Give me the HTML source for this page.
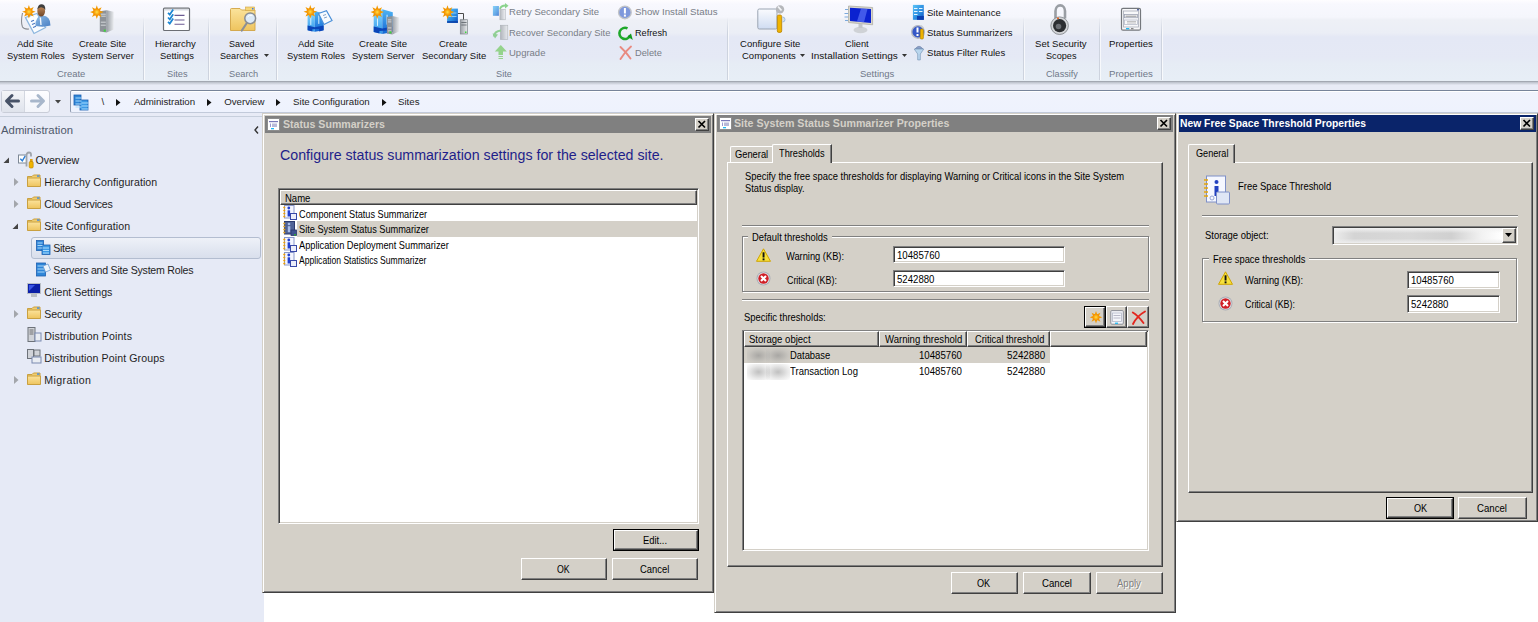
<!DOCTYPE html>
<html><head><meta charset="utf-8">
<style>
*{margin:0;padding:0;box-sizing:border-box}
html,body{width:1538px;height:622px;overflow:hidden;background:#fff;font-family:"Liberation Sans",sans-serif;position:relative}
.t{position:absolute;white-space:nowrap}
.r{position:absolute}
svg.r{overflow:visible}
</style></head><body>
<div class="r" style="left:0px;top:0px;width:1538px;height:82px;background:linear-gradient(#fefdff 0px,#f8f8fe 4px,#f5f6fc 17px,#eef0f6 20px,#ebeef6 33px,#e4e8f5 37px,#e5e9f5 58px,#e6ecf5 63px,#e7eef6 80px)"></div>
<div class="r" style="left:0px;top:81px;width:1538px;height:1px;background:#a3a8b2"></div>
<div class="r" style="left:0px;top:82px;width:1538px;height:3px;background:linear-gradient(#b9bec8,#e6e9f4)"></div>
<div class="r" style="left:143px;top:17px;width:1px;height:63px;background:linear-gradient(rgba(205,211,222,0),#cdd3de 25%,#cdd3de)"></div>
<div class="r" style="left:144px;top:17px;width:1px;height:63px;background:linear-gradient(rgba(255,255,255,0),rgba(255,255,255,.7) 25%,rgba(255,255,255,.7))"></div>
<div class="r" style="left:208px;top:17px;width:1px;height:63px;background:linear-gradient(rgba(205,211,222,0),#cdd3de 25%,#cdd3de)"></div>
<div class="r" style="left:209px;top:17px;width:1px;height:63px;background:linear-gradient(rgba(255,255,255,0),rgba(255,255,255,.7) 25%,rgba(255,255,255,.7))"></div>
<div class="r" style="left:276px;top:17px;width:1px;height:63px;background:linear-gradient(rgba(205,211,222,0),#cdd3de 25%,#cdd3de)"></div>
<div class="r" style="left:277px;top:17px;width:1px;height:63px;background:linear-gradient(rgba(255,255,255,0),rgba(255,255,255,.7) 25%,rgba(255,255,255,.7))"></div>
<div class="r" style="left:727px;top:17px;width:1px;height:63px;background:linear-gradient(rgba(205,211,222,0),#cdd3de 25%,#cdd3de)"></div>
<div class="r" style="left:728px;top:17px;width:1px;height:63px;background:linear-gradient(rgba(255,255,255,0),rgba(255,255,255,.7) 25%,rgba(255,255,255,.7))"></div>
<div class="r" style="left:1023px;top:17px;width:1px;height:63px;background:linear-gradient(rgba(205,211,222,0),#cdd3de 25%,#cdd3de)"></div>
<div class="r" style="left:1024px;top:17px;width:1px;height:63px;background:linear-gradient(rgba(255,255,255,0),rgba(255,255,255,.7) 25%,rgba(255,255,255,.7))"></div>
<div class="r" style="left:1099px;top:17px;width:1px;height:63px;background:linear-gradient(rgba(205,211,222,0),#cdd3de 25%,#cdd3de)"></div>
<div class="r" style="left:1100px;top:17px;width:1px;height:63px;background:linear-gradient(rgba(255,255,255,0),rgba(255,255,255,.7) 25%,rgba(255,255,255,.7))"></div>
<div class="r" style="left:1161px;top:17px;width:1px;height:63px;background:linear-gradient(rgba(205,211,222,0),#cdd3de 25%,#cdd3de)"></div>
<div class="r" style="left:1162px;top:17px;width:1px;height:63px;background:linear-gradient(rgba(255,255,255,0),rgba(255,255,255,.7) 25%,rgba(255,255,255,.7))"></div>
<div class="t" style="left:17.1px;top:38.92px;font-size:9.9px;line-height:9.9px;color:#111;transform:scaleX(0.9646);transform-origin:0 0;">Add Site</div>
<div class="t" style="left:6.8px;top:50.92px;font-size:9.9px;line-height:9.9px;color:#111;transform:scaleX(0.9465);transform-origin:0 0;">System Roles</div>
<div class="t" style="left:78.5px;top:38.92px;font-size:9.9px;line-height:9.9px;color:#111;transform:scaleX(0.9571);transform-origin:0 0;">Create Site</div>
<div class="t" style="left:71.7px;top:50.92px;font-size:9.9px;line-height:9.9px;color:#111;transform:scaleX(0.9551);transform-origin:0 0;">System Server</div>
<div class="t" style="left:155.3px;top:38.92px;font-size:9.9px;line-height:9.9px;color:#111;transform:scaleX(0.9678);transform-origin:0 0;">Hierarchy</div>
<div class="t" style="left:159.7px;top:50.92px;font-size:9.9px;line-height:9.9px;color:#111;transform:scaleX(0.9505);transform-origin:0 0;">Settings</div>
<div class="t" style="left:229.1px;top:38.92px;font-size:9.9px;line-height:9.9px;color:#111;transform:scaleX(0.9119);transform-origin:0 0;">Saved</div>
<div class="t" style="left:220.4px;top:50.92px;font-size:9.9px;line-height:9.9px;color:#111;transform:scaleX(0.9181);transform-origin:0 0;">Searches</div>
<div class="t" style="left:297.8px;top:38.92px;font-size:9.9px;line-height:9.9px;color:#111;transform:scaleX(0.9592);transform-origin:0 0;">Add Site</div>
<div class="t" style="left:287.3px;top:50.92px;font-size:9.9px;line-height:9.9px;color:#111;transform:scaleX(0.9514);transform-origin:0 0;">System Roles</div>
<div class="t" style="left:358.8px;top:38.92px;font-size:9.9px;line-height:9.9px;color:#111;transform:scaleX(0.9732);transform-origin:0 0;">Create Site</div>
<div class="t" style="left:352.3px;top:50.92px;font-size:9.9px;line-height:9.9px;color:#111;transform:scaleX(0.9658);transform-origin:0 0;">System Server</div>
<div class="t" style="left:439.0px;top:38.92px;font-size:9.9px;line-height:9.9px;color:#111;transform:scaleX(0.9557);transform-origin:0 0;">Create</div>
<div class="t" style="left:422.0px;top:50.92px;font-size:9.9px;line-height:9.9px;color:#111;transform:scaleX(0.9577);transform-origin:0 0;">Secondary Site</div>
<div class="t" style="left:740.3px;top:38.92px;font-size:9.9px;line-height:9.9px;color:#111;transform:scaleX(0.9643);transform-origin:0 0;">Configure Site</div>
<div class="t" style="left:741.5px;top:50.92px;font-size:9.9px;line-height:9.9px;color:#111;transform:scaleX(0.9620);transform-origin:0 0;">Components</div>
<div class="t" style="left:845.0px;top:38.92px;font-size:9.9px;line-height:9.9px;color:#111;transform:scaleX(0.9363);transform-origin:0 0;">Client</div>
<div class="t" style="left:811.2px;top:50.92px;font-size:9.9px;line-height:9.9px;color:#111;transform:scaleX(1.0134);transform-origin:0 0;">Installation Settings</div>
<div class="t" style="left:1034.7px;top:38.92px;font-size:9.9px;line-height:9.9px;color:#111;transform:scaleX(0.9686);transform-origin:0 0;">Set Security</div>
<div class="t" style="left:1046.0px;top:50.92px;font-size:9.9px;line-height:9.9px;color:#111;transform:scaleX(0.9267);transform-origin:0 0;">Scopes</div>
<div class="t" style="left:1108.9px;top:38.92px;font-size:9.9px;line-height:9.9px;color:#111;transform:scaleX(0.9729);transform-origin:0 0;">Properties</div>
<svg class="r" style="left:263.5px;top:54px" width="5" height="3"><path d="M0 0H5L2.5 3Z" fill="#333"/></svg>
<svg class="r" style="left:799.5px;top:54px" width="5" height="3"><path d="M0 0H5L2.5 3Z" fill="#333"/></svg>
<svg class="r" style="left:902px;top:54px" width="5" height="3"><path d="M0 0H5L2.5 3Z" fill="#333"/></svg>
<div class="t" style="left:509.3px;top:7.22px;font-size:9.9px;line-height:9.9px;color:#787d86;transform:scaleX(0.9653);transform-origin:0 0;">Retry Secondary Site</div>
<div class="t" style="left:509.3px;top:27.82px;font-size:9.9px;line-height:9.9px;color:#787d86;transform:scaleX(0.9526);transform-origin:0 0;">Recover Secondary Site</div>
<div class="t" style="left:509.3px;top:48.12px;font-size:9.9px;line-height:9.9px;color:#787d86;transform:scaleX(0.9611);transform-origin:0 0;">Upgrade</div>
<div class="t" style="left:635.0px;top:7.22px;font-size:9.9px;line-height:9.9px;color:#787d86;transform:scaleX(0.9834);transform-origin:0 0;">Show Install Status</div>
<div class="t" style="left:635.0px;top:27.82px;font-size:9.9px;line-height:9.9px;color:#111;transform:scaleX(0.9289);transform-origin:0 0;">Refresh</div>
<div class="t" style="left:635.0px;top:48.12px;font-size:9.9px;line-height:9.9px;color:#787d86;transform:scaleX(0.9400);transform-origin:0 0;">Delete</div>
<div class="t" style="left:927.3px;top:7.52px;font-size:9.9px;line-height:9.9px;color:#111;transform:scaleX(0.9660);transform-origin:0 0;">Site Maintenance</div>
<div class="t" style="left:927.3px;top:27.82px;font-size:9.9px;line-height:9.9px;color:#111;transform:scaleX(0.9627);transform-origin:0 0;">Status Summarizers</div>
<div class="t" style="left:927.3px;top:48.12px;font-size:9.9px;line-height:9.9px;color:#111;transform:scaleX(0.9693);transform-origin:0 0;">Status Filter Rules</div>
<div class="t" style="left:57.0px;top:69.22px;font-size:9.9px;line-height:9.9px;color:#6f7888;transform:scaleX(0.9557);transform-origin:0 0;">Create</div>
<div class="t" style="left:167.3px;top:69.22px;font-size:9.9px;line-height:9.9px;color:#6f7888;transform:scaleX(0.9360);transform-origin:0 0;">Sites</div>
<div class="t" style="left:228.8px;top:69.22px;font-size:9.9px;line-height:9.9px;color:#6f7888;transform:scaleX(0.9340);transform-origin:0 0;">Search</div>
<div class="t" style="left:495.8px;top:69.22px;font-size:9.9px;line-height:9.9px;color:#6f7888;transform:scaleX(0.9320);transform-origin:0 0;">Site</div>
<div class="t" style="left:860.0px;top:69.22px;font-size:9.9px;line-height:9.9px;color:#6f7888;transform:scaleX(0.9616);transform-origin:0 0;">Settings</div>
<div class="t" style="left:1046.0px;top:69.22px;font-size:9.9px;line-height:9.9px;color:#6f7888;transform:scaleX(0.9234);transform-origin:0 0;">Classify</div>
<div class="t" style="left:1108.9px;top:69.22px;font-size:9.9px;line-height:9.9px;color:#6f7888;transform:scaleX(0.9729);transform-origin:0 0;">Properties</div>
<svg width="0" height="0" style="position:absolute"><defs><radialGradient id="gStar"><stop offset="0" stop-color="#ffe04a"/><stop offset=".5" stop-color="#fbb21a"/><stop offset="1" stop-color="#f28a00"/></radialGradient><linearGradient id="gBody" x1="0" y1="0" x2="1" y2="1"><stop offset="0" stop-color="#8ebbe6"/><stop offset="1" stop-color="#4a80c4"/></linearGradient><linearGradient id="gFace" x1="0" y1="0" x2="0" y2="1"><stop offset="0" stop-color="#c88f5e"/><stop offset="1" stop-color="#6e4426"/></linearGradient><linearGradient id="gSrv" x1="0" y1="0" x2="1" y2="0"><stop offset="0" stop-color="#9a9fa5"/><stop offset="1" stop-color="#e9ebee"/></linearGradient><linearGradient id="gBld" x1="0" y1="0" x2="1" y2="1"><stop offset="0" stop-color="#5cc4f7"/><stop offset=".6" stop-color="#2a8ae0"/><stop offset="1" stop-color="#0c4fc0"/></linearGradient><linearGradient id="gFold" x1="0" y1="0" x2="0" y2="1"><stop offset="0" stop-color="#fbe39c"/><stop offset="1" stop-color="#eec45e"/></linearGradient><linearGradient id="gWin" x1="0" y1="0" x2="0" y2="1"><stop offset="0" stop-color="#fafbfe"/><stop offset="1" stop-color="#cfdcf2"/></linearGradient><linearGradient id="gBldL" x1="0" y1="0" x2="0" y2="1"><stop offset="0" stop-color="#8fdcff"/><stop offset="1" stop-color="#2f95ea"/></linearGradient><linearGradient id="gBldR" x1="0" y1="0" x2="0" y2="1"><stop offset="0" stop-color="#4fb4f4"/><stop offset="1" stop-color="#1468d4"/></linearGradient></defs></svg>
<svg class="r" style="left:18px;top:2px" width="36" height="34" viewBox="18 2 36 34"><path d="M22.5 13 Q20.5 22 22.5 27 Q24 29.5 29 29" fill="none" stroke="#8a8d92" stroke-width="1.1"/><path d="M25.5 17.5 L37 13.5 L45.5 27.5 L34 33.5 Z" fill="#fbfdff" stroke="#8cb6de" stroke-width="1.3"/><path d="M31 21.5 l3-1.2 M32 24.5 l3-1.2 M33 27.5 l3-1.2" stroke="#4c78c0" stroke-width="1.1"/><path d="M35.5 26 Q35 16 42.5 15.5 Q50.5 16 50.5 25.5 Q45 27 40 26.5 Z" fill="url(#gBody)"/><path d="M40.3 17.5 L41 25" stroke="#f4f7fb" stroke-width="1.4"/><ellipse cx="41.2" cy="11" rx="3.9" ry="5.6" fill="url(#gFace)"/><path d="M37.3 9.5 Q38 4 42 4.3 Q45.5 4.6 45.3 10 Q44 7.5 41 7.3 Q38.5 7.5 37.3 9.5Z" fill="#3e3e3e"/><polygon points="28.90,5.00 30.20,8.66 33.71,6.99 32.04,10.50 35.70,11.80 32.04,13.10 33.71,16.61 30.20,14.94 28.90,18.60 27.60,14.94 24.09,16.61 25.76,13.10 22.10,11.80 25.76,10.50 24.09,6.99 27.60,8.66" fill="#f39a00"/><circle cx="28.9" cy="11.8" r="3.54" fill="url(#gStar)"/></svg>
<svg class="r" style="left:87px;top:2px" width="30" height="34" viewBox="87 2 30 34"><path d="M99.8 11.2 L106.75 10.2 L106.75 32.6 L99.8 31.6 Z" fill="#8d9298"/><path d="M106.75 10.2 L113.7 11.7 L113.7 29.6 L106.75 32.6 Z" fill="url(#gSrv)"/><path d="M100.8 14.2 h4.950000000000003 M100.8 16.2 h4.950000000000003 M100.8 22.2 h4.950000000000003 M100.8 25.2 h4.950000000000003" stroke="#e6e8eb" stroke-width=".8"/><rect x="103.75" y="29.6" width="2" height="2" fill="#38d838"/><polygon points="96.80,5.30 98.10,8.96 101.61,7.29 99.94,10.80 103.60,12.10 99.94,13.40 101.61,16.91 98.10,15.24 96.80,18.90 95.50,15.24 91.99,16.91 93.66,13.40 90.00,12.10 93.66,10.80 91.99,7.29 95.50,8.96" fill="#f39a00"/><circle cx="96.8" cy="12.1" r="3.54" fill="url(#gStar)"/></svg>
<svg class="r" style="left:161px;top:6px" width="31" height="27" viewBox="161 6 31 27"><rect x="163.5" y="8.2" width="26" height="22.3" rx="1" fill="#fff" stroke="#6b6e74" stroke-width="1.2"/><rect x="164.2" y="8.9" width="24.6" height="1.6" fill="#d9dce3"/><path d="M168 12.8 l1.8 1.8 l3.4-5 M168 17.5 l1.8 1.8 l3.4-5 M168 21.8 l1.8 1.8 l3.4-5" fill="none" stroke="#1d86d2" stroke-width="1.7"/><path d="M174.5 15.4 h10 M174.5 20 h10 M174.5 24.3 h10" stroke="#6b5a92" stroke-width="1.1"/></svg>
<svg class="r" style="left:228px;top:5px" width="31" height="28" viewBox="228 5 31 28"><path d="M230.5 9.5 Q230.5 8.5 231.5 8.5 H240 L241.5 10 H255 V30.5 H230.5Z" fill="url(#gFold)" stroke="#d1a444" stroke-width=".9"/><rect x="245.5" y="7" width="9" height="3.5" fill="#f6d678" stroke="#d1a444" stroke-width=".6"/><rect x="252" y="8" width="1.5" height="1.5" fill="#3a7cf0"/><path d="M246.5 23.5 L241.8 30.5" stroke="#8b8f95" stroke-width="2.2" stroke-linecap="round"/><circle cx="250.2" cy="18.3" r="5.4" fill="#dceaf7" stroke="#8a8e94" stroke-width="1.5"/><path d="M247.5 17 Q249 14.8 252.5 15.2" fill="none" stroke="#fff" stroke-width="1"/></svg>
<svg class="r" style="left:298px;top:2px" width="36" height="34" viewBox="298 2 36 34"><path d="M307.6 13.496 L314.8 11 L314.8 31.8 L307.6 30.136Z" fill="url(#gBldL)"/><path d="M314.8 11 L323.6 13.496 L323.6 30.136 L314.8 31.8Z" fill="url(#gBldR)"/><path d="M310.8 16.616 L310.8 24.936 M318.8 15.576 L318.8 23.896" stroke="#e8f8ff" stroke-width="1" opacity=".9"/><path d="M307.6 25.560000000000002 L314.8 27.224 L323.6 25.560000000000002 L323.6 30.136 L319.12 31.384 L319.12 28.888 L312.40000000000003 29.304000000000002 L312.40000000000003 31.384 L307.6 30.136Z" fill="#0b45b8"/><path d="M318.5 13.5 L326.5 10.8 L332 20.5 L324 24.5 Z" fill="#f7fbff" stroke="#4a8fd8" stroke-width="1.2"/><path d="M323 15.5 l3-1 M324 18 l3-1" stroke="#6a8ab8" stroke-width=".8"/><polygon points="310.30,5.00 311.60,8.66 315.11,6.99 313.44,10.50 317.10,11.80 313.44,13.10 315.11,16.61 311.60,14.94 310.30,18.60 309.00,14.94 305.49,16.61 307.16,13.10 303.50,11.80 307.16,10.50 305.49,6.99 309.00,8.66" fill="#f39a00"/><circle cx="310.3" cy="11.8" r="3.54" fill="url(#gStar)"/></svg>
<svg class="r" style="left:365px;top:2px" width="37" height="34" viewBox="365 2 37 34"><path d="M373.7 12.264000000000001 L382.295 9.3 L382.295 34.0 L373.7 32.024Z" fill="url(#gBldL)"/><path d="M382.295 9.3 L392.8 12.264000000000001 L392.8 32.024 L382.295 34.0Z" fill="url(#gBldR)"/><path d="M377.52 15.969000000000001 L377.52 25.849000000000004 M387.07 14.734000000000002 L387.07 24.614" stroke="#e8f8ff" stroke-width="1" opacity=".9"/><path d="M373.7 26.59 L382.295 28.566 L392.8 26.59 L392.8 32.024 L387.452 33.506 L387.452 30.542 L379.43 31.036 L379.43 33.506 L373.7 32.024Z" fill="#0b45b8"/><path d="M386.9 16.9 L392.39 15.9 L392.39 34.4 L386.9 33.4 Z" fill="#8d9298"/><path d="M392.39 15.9 L399.1 17.4 L399.1 31.4 L392.39 34.4 Z" fill="url(#gSrv)"/><path d="M387.9 19.9 h3.490000000000009 M387.9 21.9 h3.490000000000009 M387.9 27.9 h3.490000000000009 M387.9 30.9 h3.490000000000009" stroke="#e6e8eb" stroke-width=".8"/><rect x="389.39" y="31.4" width="2" height="2" fill="#38d838"/><polygon points="377.20,5.30 378.50,8.96 382.01,7.29 380.34,10.80 384.00,12.10 380.34,13.40 382.01,16.91 378.50,15.24 377.20,18.90 375.90,15.24 372.39,16.91 374.06,13.40 370.40,12.10 374.06,10.80 372.39,7.29 375.90,8.96" fill="#f39a00"/><circle cx="377.2" cy="12.1" r="3.54" fill="url(#gStar)"/></svg>
<svg class="r" style="left:438px;top:2px" width="32" height="34" viewBox="438 2 32 34"><rect x="447.1" y="8.6" width="10.8" height="14.3" fill="url(#gBld)"/><path d="M447.1 22 h10.8" stroke="#0a3fa8" stroke-width="1.6"/><path d="M448.5 13 h8 M448.5 16.5 h8" stroke="#c9f0ff" stroke-width=".8" opacity=".8"/><path d="M457.9 13.5 H463.5 V20" fill="none" stroke="#4a4a4a" stroke-width="1"/><rect x="460.3" y="19.7" width="7.3" height="14.3" fill="url(#gSrv)" stroke="#7f858b" stroke-width=".7"/><path d="M461.3 22.5 h5.3 M461.3 25 h5.3" stroke="#5b6167" stroke-width=".8"/><rect x="465" y="31.5" width="1.5" height="1.5" fill="#38d838"/><polygon points="447.50,5.30 448.80,8.96 452.31,7.29 450.64,10.80 454.30,12.10 450.64,13.40 452.31,16.91 448.80,15.24 447.50,18.90 446.20,15.24 442.69,16.91 444.36,13.40 440.70,12.10 444.36,10.80 442.69,7.29 446.20,8.96" fill="#f39a00"/><circle cx="447.5" cy="12.1" r="3.54" fill="url(#gStar)"/></svg>
<svg class="r" style="left:490px;top:3px" width="20" height="18" viewBox="490 3 20 18"><g opacity=".7"><rect x="492.9" y="6" width="6" height="9.8" fill="url(#gBld)"/><rect x="499.9" y="9.4" width="5.4" height="10.4" fill="url(#gSrv)" stroke="#8a9096" stroke-width=".5"/><path d="M500 9 Q501 5.5 505.5 5.5" fill="none" stroke="#5cc45c" stroke-width="1.8"/><path d="M505 3 L508.5 5.7 L505 8.5Z" fill="#5cc45c"/></g></svg>
<svg class="r" style="left:490px;top:23px" width="20" height="18" viewBox="490 23 20 18"><g opacity=".7"><rect x="500.4" y="25.2" width="7.4" height="14.3" fill="url(#gSrv)" stroke="#8a9096" stroke-width=".5"/><path d="M494 36.5 Q494.5 31 501 30.5" fill="none" stroke="#6cc46c" stroke-width="2.2"/><path d="M492.5 33.5 L495 38.5 L498 34.5Z" fill="#6cc46c"/></g></svg>
<svg class="r" style="left:492px;top:43px" width="18" height="18" viewBox="492 43 18 18"><g opacity=".75"><path d="M500.8 45 L506.8 51.5 H503 V55 H498.5 V51.5 H494.8Z" fill="#7acc6a"/><path d="M498.5 56.5 h4.5 M498.5 58.5 h4.5" stroke="#7acc6a" stroke-width="1.2"/></g></svg>
<svg class="r" style="left:616px;top:4px" width="18" height="17" viewBox="616 4 18 17"><circle cx="624.9" cy="12.4" r="6.3" fill="#7e98dc" stroke="#c2c4c8" stroke-width="1.4"/><rect x="623.9" y="8" width="2" height="5.5" fill="#fff"/><rect x="623.9" y="14.6" width="2" height="2" fill="#fff"/></svg>
<svg class="r" style="left:616px;top:25px" width="18" height="17" viewBox="616 25 18 17"><path d="M630.2 35.5 A5.6 5.6 0 1 1 627.5 28.4" fill="none" stroke="#1ea82a" stroke-width="2.6"/><path d="M627.5 36.5 L632.8 40 L631 33.5Z" fill="#129a1e"/></svg>
<svg class="r" style="left:618px;top:44px" width="16" height="17" viewBox="618 44 16 17"><path d="M620.5 47 Q626 52 630.5 58.5 M631 46.5 Q625 51.5 620.5 59" fill="none" stroke="#e88a80" stroke-width="1.9" stroke-linecap="round"/></svg>
<svg class="r" style="left:755px;top:3px" width="33" height="33" viewBox="755 3 33 33"><rect x="757.8" y="9" width="19.2" height="20" rx="1.5" fill="url(#gWin)" stroke="#9aa4b2" stroke-width="1"/><path d="M782.5 17 A2.5 2.5 0 0 1 782.5 22" fill="#cfe0f4" stroke="#8fb0d8" stroke-width=".8"/><rect x="777.3" y="15" width="4.4" height="17.4" rx="1.5" fill="#f0b400" stroke="#b88200" stroke-width=".8"/><circle cx="780" cy="9.4" r="4.2" fill="#b5b7bb"/><path d="M778 6.5 L781.5 10.5" stroke="#f3f4f6" stroke-width="1.8"/></svg>
<svg class="r" style="left:842px;top:3px" width="34" height="32" viewBox="842 3 34 32"><path d="M845 9.5h3 M844.5 13.5h4 M844.5 17h4 M845 20.5h3" stroke="#7aa8dc" stroke-width="1"/><path d="M848.5 6 L872.6 7.5 L872.6 24.8 L848.5 22.5Z" fill="#d8d6cc" stroke="#b0aea4" stroke-width=".8"/><path d="M850 7.8 L871 9 L871 23 L850 21Z" fill="#0b22d0"/><path d="M861 8.5 L867.5 9 L864 22.3 L857 21.6Z" fill="#6f86ff" opacity=".55"/><ellipse cx="860.5" cy="30" rx="7" ry="3.2" fill="#cfd2d6"/><rect x="858.5" y="24" width="4" height="4" fill="#c2c5c9"/></svg>
<svg class="r" style="left:911px;top:3px" width="15" height="18" viewBox="911 3 15 18"><rect x="912.9" y="4.9" width="10.9" height="14.9" fill="url(#gBld)"/><path d="M914 8.5h3.5 M919 8.5h3.5 M914 11.5h3.5 M919 11.5h3.5 M914 14.5h3.5" stroke="#e6f6ff" stroke-width="1.1"/><rect x="917" y="16" width="6.8" height="3.8" fill="#0b3fb0"/></svg>
<svg class="r" style="left:910px;top:24px" width="17" height="17" viewBox="910 24 17 17"><circle cx="918" cy="31.9" r="6.3" fill="#3558c8" stroke="#b8bbc0" stroke-width="1.4"/><rect x="916.5" y="27.5" width="2" height="5" fill="#fff"/><rect x="916.5" y="34" width="2" height="2" fill="#fff"/><rect x="920.2" y="29" width="3.2" height="10" rx="1" fill="#f0b400" stroke="#a87a00" stroke-width=".6"/><path d="M921 25.5 l2.5 2.5" stroke="#c9cbd0" stroke-width="1.4"/></svg>
<svg class="r" style="left:912px;top:44px" width="14" height="17" viewBox="912 44 14 17"><path d="M915 49 Q919 43.5 923 49Z" fill="#8aa0c8" stroke="#6a7fa8" stroke-width=".6"/><path d="M914.2 49 H923.8 L920.3 54 V59.9 H917.7 V54Z" fill="#b9d6ee" stroke="#7a98b8" stroke-width=".7"/></svg>
<svg class="r" style="left:1046px;top:3px" width="29" height="33" viewBox="1046 3 29 33"><path d="M1055.5 18.5 V11 A4.7 5.6 0 0 1 1065 11 V18.5" fill="none" stroke="#9a9ea4" stroke-width="2.6"/><circle cx="1059.6" cy="25.7" r="8.8" fill="#d3d5d8" stroke="#7d8186" stroke-width=".8"/><circle cx="1059.6" cy="25.7" r="6.6" fill="#2c2e31"/><circle cx="1058.5" cy="26.5" r="2.8" fill="#6a6d72"/><rect x="1057" y="17.5" width="2" height="1.5" fill="#e86a2a"/></svg>
<svg class="r" style="left:1119px;top:6px" width="24" height="27" viewBox="1119 6 24 27"><rect x="1121.5" y="8.4" width="19" height="21.8" rx="1.5" fill="#f8f8fa" stroke="#74777c" stroke-width="1.2"/><rect x="1123.5" y="11" width="15" height="16" fill="none" stroke="#a9acb8" stroke-width=".8"/><rect x="1124.5" y="14.5" width="13" height="3.2" fill="none" stroke="#9ea4b4" stroke-width=".8"/><path d="M1125.5 16.2 h11" stroke="#777" stroke-width=".8"/><rect x="1124.5" y="20" width="13" height="4.5" fill="none" stroke="#b0b6c4" stroke-width=".7"/><path d="M1127 21.5 h9 M1127 23 h9" stroke="#aaa" stroke-width=".7"/><rect x="1126" y="28" width="3.3" height="1.3" fill="#20b8f0"/><rect x="1131" y="28" width="2.5" height="1.3" fill="#888"/><rect x="1137" y="9" width="2" height="1.5" fill="#5a6aa0"/></svg>
<div class="r" style="left:0px;top:85px;width:1538px;height:31px;background:#e8ebf6"></div>
<div class="r" style="left:0px;top:116px;width:1538px;height:1px;background:#c7cfdc"></div>
<div class="r" style="left:1px;top:90px;width:49px;height:23px;background:linear-gradient(#fdfdff,#f2f4fa);border:1px solid #c9cdd8;border-radius:3px"></div>
<div class="r" style="left:2px;top:91px;width:22px;height:21px;background:linear-gradient(#f4f5f8,#dfe3ec)"></div>
<div class="r" style="left:24px;top:91px;width:1px;height:21px;background:#d3d7e0"></div>
<svg class="r" style="left:4px;top:93px" width="17" height="17" viewBox="0 0 17 17"><path d="M8 2.5 L2.5 8 L8 13.5 M3 8 H14.5" fill="none" stroke="#485368" stroke-width="3" stroke-linecap="round" stroke-linejoin="round"/></svg>
<svg class="r" style="left:29px;top:93px" width="17" height="17" viewBox="0 0 17 17"><path d="M9 2.5 L14.5 8 L9 13.5 M14 8 H2.5" fill="none" stroke="#a8b7cb" stroke-width="3" stroke-linecap="round" stroke-linejoin="round"/></svg>
<svg class="r" style="left:55px;top:99.5px" width="6" height="4" viewBox="0 0 6 4"><path d="M0 0H6L3 3.5Z" fill="#444"/></svg>
<div class="r" style="left:70px;top:90px;width:1475px;height:23px;background:linear-gradient(#f0f3fd,#eef2fd);border:1px solid;border-color:#77849a #9aa6b8 #c2cada #8f9bb0;border-radius:2px;box-shadow:inset 0 1px 0 #fff"></div>
<svg class="r" style="left:74px;top:94px" width="16" height="16" viewBox="0 0 16 16"><g transform="translate(0,-1)"><rect x="0" y="2" width="7" height="10" fill="#2f86d8"/><rect x="0" y="2" width="7" height="10" fill="none" stroke="#1c5fb0" stroke-width=".8"/><rect x="6" y="7" width="8" height="10" fill="#3d9ae6"/><rect x="6" y="7" width="8" height="10" fill="none" stroke="#1c5fb0" stroke-width=".8"/><path d="M1.5 5h6M1.5 8h6M1.5 11h6M1.5 14h6M7.5 10h7M7.5 13h7M7.5 16h7" stroke="#a8dcff" stroke-width="1"/></g></svg>
<div class="t" style="left:101.4px;top:96.79px;font-size:9.7px;line-height:9.7px;color:#1e1e1e;">\</div>
<svg class="r" style="left:116px;top:98.5px" width="5" height="7" viewBox="0 0 5 7"><path d="M0 0 L4.5 3.5 L0 7Z" fill="#111"/></svg>
<svg class="r" style="left:207px;top:98.5px" width="5" height="7" viewBox="0 0 5 7"><path d="M0 0 L4.5 3.5 L0 7Z" fill="#111"/></svg>
<svg class="r" style="left:276px;top:98.5px" width="5" height="7" viewBox="0 0 5 7"><path d="M0 0 L4.5 3.5 L0 7Z" fill="#111"/></svg>
<svg class="r" style="left:381.8px;top:98.5px" width="5" height="7" viewBox="0 0 5 7"><path d="M0 0 L4.5 3.5 L0 7Z" fill="#111"/></svg>
<div class="t" style="left:133.9px;top:96.79px;font-size:9.7px;line-height:9.7px;color:#1e1e1e;letter-spacing:-0.012px;">Administration</div>
<div class="t" style="left:224.3px;top:96.79px;font-size:9.7px;line-height:9.7px;color:#1e1e1e;letter-spacing:-0.032px;">Overview</div>
<div class="t" style="left:293.1px;top:96.79px;font-size:9.7px;line-height:9.7px;color:#1e1e1e;letter-spacing:-0.024px;">Site Configuration</div>
<div class="t" style="left:398.0px;top:96.79px;font-size:9.7px;line-height:9.7px;color:#1e1e1e;letter-spacing:-0.016px;">Sites</div>
<div class="r" style="left:0px;top:117px;width:264px;height:505px;background:#e6eaf6"></div>
<div class="t" style="left:1.0px;top:125.43px;font-size:11.3px;line-height:11.3px;color:#4f596b;letter-spacing:0.031px;">Administration</div>
<svg class="r" style="left:254px;top:126px" width="5" height="8" viewBox="0 0 5 8"><path d="M4 0.5 L1 4 L4 7.5" fill="none" stroke="#333" stroke-width="1.4"/></svg>
<svg class="r" style="left:3px;top:157px" width="7" height="7" viewBox="0 0 7 7"><path d="M6 0.5 V6 H0.5Z" fill="#444"/></svg>
<svg class="r" style="left:18px;top:151px" width="16" height="18" viewBox="0 0 16 18"><rect x="0.5" y="4" width="8" height="8" fill="#fff" stroke="#7d8896" stroke-width="1"/><path d="M2.3 7.8 l2 2 3-5" fill="none" stroke="#2a7dd6" stroke-width="1.4"/><path d="M8.5 15.5 V5 Q8.5 1.5 11 1.5 Q13 1.5 13 3.5 V5.5" fill="none" stroke="#9ea3aa" stroke-width="1.8"/><rect x="12" y="8" width="2.6" height="3" fill="#e0a010"/><rect x="11.2" y="10.5" width="4" height="6.5" rx="1.2" fill="#f0b400" stroke="#b88200" stroke-width=".6"/></svg>
<div class="t" style="left:35.5px;top:155.03px;font-size:10.6px;line-height:10.6px;color:#1e1e1e;letter-spacing:-0.054px;">Overview</div>
<svg class="r" style="left:14px;top:178px" width="5" height="8" viewBox="0 0 5 8"><path d="M0 0 L4.5 4 L0 8Z" fill="#a3a6ab"/></svg>
<svg class="r" style="left:27px;top:174px" width="14" height="13" viewBox="0 0 14 13"><path d="M0.5 2.5 H5 L6.5 1 H13 V12 H0.5Z" fill="#f0cd70" stroke="#c9a040" stroke-width="1"/><path d="M0.5 4 H13.5 V12.5 H0.5Z" fill="url(#gFold)" stroke="#c9a040" stroke-width="1"/><rect x="10" y="1.3" width="2.5" height="1.5" fill="#4a8fe0"/></svg>
<div class="t" style="left:44.3px;top:177.03px;font-size:10.6px;line-height:10.6px;color:#1e1e1e;letter-spacing:0.075px;">Hierarchy Configuration</div>
<svg class="r" style="left:14px;top:200px" width="5" height="8" viewBox="0 0 5 8"><path d="M0 0 L4.5 4 L0 8Z" fill="#a3a6ab"/></svg>
<svg class="r" style="left:27px;top:196px" width="14" height="13" viewBox="0 0 14 13"><path d="M0.5 2.5 H5 L6.5 1 H13 V12 H0.5Z" fill="#f0cd70" stroke="#c9a040" stroke-width="1"/><path d="M0.5 4 H13.5 V12.5 H0.5Z" fill="url(#gFold)" stroke="#c9a040" stroke-width="1"/><rect x="10" y="1.3" width="2.5" height="1.5" fill="#4a8fe0"/></svg>
<div class="t" style="left:44.3px;top:199.03px;font-size:10.6px;line-height:10.6px;color:#1e1e1e;letter-spacing:-0.207px;">Cloud Services</div>
<svg class="r" style="left:12px;top:223px" width="7" height="7" viewBox="0 0 7 7"><path d="M6 0.5 V6 H0.5Z" fill="#444"/></svg>
<svg class="r" style="left:27px;top:218px" width="14" height="13" viewBox="0 0 14 13"><path d="M0.5 2.5 H5 L6.5 1 H13 V12 H0.5Z" fill="#f0cd70" stroke="#c9a040" stroke-width="1"/><path d="M0.5 4 H13.5 V12.5 H0.5Z" fill="url(#gFold)" stroke="#c9a040" stroke-width="1"/><rect x="10" y="1.3" width="2.5" height="1.5" fill="#4a8fe0"/></svg>
<div class="t" style="left:44.3px;top:221.03px;font-size:10.6px;line-height:10.6px;color:#1e1e1e;letter-spacing:0.090px;">Site Configuration</div>
<svg class="r" style="left:27px;top:283px" width="15" height="15" viewBox="0 0 15 15"><rect x="0.5" y="0.5" width="13" height="10" fill="#0b1fa8" stroke="#b9bec6" stroke-width="1"/><path d="M2 2 L8 2 L2 8Z" fill="#4e6cff" opacity=".7"/><rect x="4" y="11" width="6" height="3" fill="#b9bec6"/></svg>
<div class="t" style="left:44.3px;top:287.03px;font-size:10.6px;line-height:10.6px;color:#1e1e1e;letter-spacing:-0.018px;">Client Settings</div>
<svg class="r" style="left:14px;top:310px" width="5" height="8" viewBox="0 0 5 8"><path d="M0 0 L4.5 4 L0 8Z" fill="#a3a6ab"/></svg>
<svg class="r" style="left:27px;top:306px" width="14" height="13" viewBox="0 0 14 13"><path d="M0.5 2.5 H5 L6.5 1 H13 V12 H0.5Z" fill="#f0cd70" stroke="#c9a040" stroke-width="1"/><path d="M0.5 4 H13.5 V12.5 H0.5Z" fill="url(#gFold)" stroke="#c9a040" stroke-width="1"/><rect x="10" y="1.3" width="2.5" height="1.5" fill="#4a8fe0"/></svg>
<div class="t" style="left:44.3px;top:309.03px;font-size:10.6px;line-height:10.6px;color:#1e1e1e;letter-spacing:-0.085px;">Security</div>
<svg class="r" style="left:27px;top:327px" width="15" height="15" viewBox="0 0 15 15"><rect x="1" y="0.5" width="7" height="14" fill="#d0d3d8" stroke="#6d7279" stroke-width="1"/><path d="M2.5 3h4M2.5 5h4M2.5 7h4" stroke="#555" stroke-width=".8"/><rect x="8" y="6" width="6" height="8" fill="#e9edf3" stroke="#7a8ab0" stroke-width="1"/></svg>
<div class="t" style="left:44.3px;top:331.03px;font-size:10.6px;line-height:10.6px;color:#1e1e1e;letter-spacing:0.126px;">Distribution Points</div>
<svg class="r" style="left:27px;top:349px" width="15" height="15" viewBox="0 0 15 15"><rect x="0.5" y="0.5" width="6" height="9" fill="#d0d3d8" stroke="#6d7279" stroke-width="1"/><rect x="7" y="1" width="6" height="6" fill="#d0d3d8" stroke="#6d7279" stroke-width="1"/><rect x="5" y="8" width="9" height="6" fill="#e9edf3" stroke="#7a8ab0" stroke-width="1"/></svg>
<div class="t" style="left:44.3px;top:353.03px;font-size:10.6px;line-height:10.6px;color:#1e1e1e;letter-spacing:0.103px;">Distribution Point Groups</div>
<svg class="r" style="left:14px;top:376px" width="5" height="8" viewBox="0 0 5 8"><path d="M0 0 L4.5 4 L0 8Z" fill="#a3a6ab"/></svg>
<svg class="r" style="left:27px;top:372px" width="14" height="13" viewBox="0 0 14 13"><path d="M0.5 2.5 H5 L6.5 1 H13 V12 H0.5Z" fill="#f0cd70" stroke="#c9a040" stroke-width="1"/><path d="M0.5 4 H13.5 V12.5 H0.5Z" fill="url(#gFold)" stroke="#c9a040" stroke-width="1"/><rect x="10" y="1.3" width="2.5" height="1.5" fill="#4a8fe0"/></svg>
<div class="t" style="left:44.3px;top:375.03px;font-size:10.6px;line-height:10.6px;color:#1e1e1e;letter-spacing:0.388px;">Migration</div>
<div class="r" style="left:31px;top:237px;width:230px;height:22px;background:linear-gradient(#eef1f8,#e1e6f1 60%,#d9dfec);border:1px solid #b3bdd0;border-radius:3px"></div>
<svg class="r" style="left:36px;top:240px" width="15" height="15" viewBox="0 0 15 15"><rect x="0.5" y="0.5" width="7" height="10" fill="#2f86d8" stroke="#1c5fb0" stroke-width=".8"/><rect x="6" y="5" width="8" height="9.5" fill="#3d9ae6" stroke="#1c5fb0" stroke-width=".8"/><path d="M1.5 3h5M1.5 5.5h5M1.5 8h5M7 8h6M7 10.5h6M7 13h6" stroke="#b8e2ff" stroke-width=".9"/></svg>
<div class="t" style="left:53.3px;top:243.03px;font-size:10.6px;line-height:10.6px;color:#1e1e1e;letter-spacing:-0.316px;">Sites</div>
<svg class="r" style="left:36px;top:262px" width="15" height="15" viewBox="0 0 15 15"><rect x="0.5" y="1" width="9" height="13" fill="#2f86d8" stroke="#1c5fb0" stroke-width=".8"/><path d="M1.5 4h7M1.5 7h7M1.5 10h7" stroke="#b8e2ff" stroke-width=".9"/><path d="M7 4 L12 2 L14.5 8 L9.5 10Z" fill="#eef4fb" stroke="#6a9ad0" stroke-width=".8"/></svg>
<div class="t" style="left:53.3px;top:265.23px;font-size:10.6px;line-height:10.6px;color:#1e1e1e;letter-spacing:-0.228px;">Servers and Site System Roles</div>
<div class="r" style="left:264px;top:117px;width:1274px;height:505px;background:#fff"></div>
<div class="r" style="left:262px;top:113px;width:452px;height:480px;background:#d4d0c8;border:1px solid;border-color:#d4d0c8 #404040 #404040 #d4d0c8;box-shadow:inset 1px 1px 0 #fff,inset -1px -1px 0 #808080"></div>
<div class="r" style="left:265px;top:116px;width:446px;height:17px;background:#808080"></div>
<svg class="r" style="left:267px;top:118px" width="13" height="13" viewBox="0 0 13 13"><rect x="0.5" y="0.5" width="12" height="12" fill="#fff" stroke="#8d8d8d" stroke-width="1"/><rect x="2" y="3" width="9" height="1.2" fill="#7a78b8"/><rect x="3" y="5.5" width="1" height="3.5" fill="#9a9ad0"/><rect x="5" y="5.5" width="5" height="3.5" fill="#b9b9d8"/><rect x="4" y="10" width="3" height="1.3" fill="#1fb8f5"/></svg>
<div class="t" style="left:282.5px;top:118.79px;font-size:11px;line-height:11px;color:#d4d0c8;transform:scaleX(0.9635);transform-origin:0 0;font-weight:bold;">Status Summarizers</div>
<div class="r" style="left:695px;top:118px;width:14px;height:13px;background:#d4d0c8;border:1px solid;border-color:#fff #404040 #404040 #fff;box-shadow:inset -1px -1px 0 #808080"></div>
<svg class="r" style="left:695px;top:118px" width="14" height="13" viewBox="0 0 14 13"><path d="M3.5 3 L10 9.5 M10 3 L3.5 9.5" stroke="#000" stroke-width="1.7"/></svg>
<div class="t" style="left:279.6px;top:147.46px;font-size:15.4px;line-height:15.4px;color:#000080;transform:scaleX(0.9224);transform-origin:0 0;opacity:.85;">Configure status summarization settings for the selected site.</div>
<div class="r" style="left:278px;top:188px;width:421px;height:336px;background:#fff;border:1px solid;border-color:#808080 #fff #fff #808080;box-shadow:inset 1px 1px 0 #404040,inset -1px -1px 0 #d4d0c8"></div>
<div class="r" style="left:280px;top:190px;width:417px;height:15px;background:#d4d0c8;border:1px solid;border-color:#fff #404040 #404040 #fff;box-shadow:inset -1px -1px 0 #808080"></div>
<div class="t" style="left:284.6px;top:193.90px;font-size:10.4px;line-height:10.4px;color:#000;transform:scaleX(0.9156);transform-origin:0 0;">Name</div>
<div class="r" style="left:297px;top:221px;width:400px;height:16px;background:#d4d0c8"></div>
<svg class="r" style="left:282px;top:205.3px" width="15" height="15" viewBox="0 0 15 15"><rect x="2.5" y="0.5" width="9.5" height="12.5" fill="#f3f5ff" stroke="#8a98cc" stroke-width="1"/><circle cx="2.3" cy="2.5" r="1.1" fill="#f0a000"/><circle cx="2.3" cy="5.5" r="1.1" fill="#f0a000"/><circle cx="2.3" cy="8.5" r="1.1" fill="#f0a000"/><circle cx="2.3" cy="11.5" r="1.1" fill="#f0a000"/><circle cx="6.8" cy="3" r="1.4" fill="#1f3fd0"/><rect x="5.6" y="5.3" width="2.5" height="6.2" fill="#1f3fd0"/><rect x="8.5" y="8.5" width="6" height="6" fill="#eceefa" stroke="#3848a8" stroke-width="1"/></svg>
<div class="t" style="left:299.0px;top:209.50px;font-size:10.4px;line-height:10.4px;color:#000;transform:scaleX(0.8836);transform-origin:0 0;">Component Status Summarizer</div>
<svg class="r" style="left:282px;top:220.8px" width="15" height="15" viewBox="0 0 15 15"><rect x="2.5" y="0.5" width="10" height="12.5" fill="#4f6296" stroke="#2c3b6e" stroke-width="1"/><circle cx="2.3" cy="2.5" r="1.1" fill="#e0a020"/><circle cx="2.3" cy="5.5" r="1.1" fill="#e0a020"/><circle cx="2.3" cy="8.5" r="1.1" fill="#e0a020"/><circle cx="2.3" cy="11.5" r="1.1" fill="#e0a020"/><circle cx="7" cy="3" r="1.3" fill="#a9bde8"/><rect x="5.8" y="5.2" width="2.5" height="6" fill="#a9bde8"/><rect x="9" y="9" width="5.5" height="5.5" fill="#3d5290" stroke="#28366a" stroke-width=".8"/><rect x="12" y="13" width="2" height="1.5" fill="#30a040"/></svg>
<div class="t" style="left:299.0px;top:225.00px;font-size:10.4px;line-height:10.4px;color:#000;transform:scaleX(0.8855);transform-origin:0 0;">Site System Status Summarizer</div>
<svg class="r" style="left:282px;top:236.5px" width="15" height="15" viewBox="0 0 15 15"><rect x="2.5" y="0.5" width="9.5" height="12.5" fill="#f3f5ff" stroke="#8a98cc" stroke-width="1"/><circle cx="2.3" cy="2.5" r="1.1" fill="#f0a000"/><circle cx="2.3" cy="5.5" r="1.1" fill="#f0a000"/><circle cx="2.3" cy="8.5" r="1.1" fill="#f0a000"/><circle cx="2.3" cy="11.5" r="1.1" fill="#f0a000"/><circle cx="6.8" cy="3" r="1.4" fill="#1f3fd0"/><rect x="5.6" y="5.3" width="2.5" height="6.2" fill="#1f3fd0"/><rect x="8.5" y="8.5" width="6" height="6" fill="#eceefa" stroke="#3848a8" stroke-width="1"/></svg>
<div class="t" style="left:299.0px;top:240.70px;font-size:10.4px;line-height:10.4px;color:#000;transform:scaleX(0.8912);transform-origin:0 0;">Application Deployment Summarizer</div>
<svg class="r" style="left:282px;top:252px" width="15" height="15" viewBox="0 0 15 15"><rect x="2.5" y="0.5" width="9.5" height="12.5" fill="#f3f5ff" stroke="#8a98cc" stroke-width="1"/><circle cx="2.3" cy="2.5" r="1.1" fill="#f0a000"/><circle cx="2.3" cy="5.5" r="1.1" fill="#f0a000"/><circle cx="2.3" cy="8.5" r="1.1" fill="#f0a000"/><circle cx="2.3" cy="11.5" r="1.1" fill="#f0a000"/><circle cx="6.8" cy="3" r="1.4" fill="#1f3fd0"/><rect x="5.6" y="5.3" width="2.5" height="6.2" fill="#1f3fd0"/><rect x="8.5" y="8.5" width="6" height="6" fill="#eceefa" stroke="#3848a8" stroke-width="1"/></svg>
<div class="t" style="left:299.0px;top:256.20px;font-size:10.4px;line-height:10.4px;color:#000;transform:scaleX(0.8262);transform-origin:0 0;">Application Statistics Summarizer</div>
<div class="r" style="left:613px;top:529px;width:86px;height:22px;background:#000"></div>
<div class="r" style="left:614px;top:530px;width:84px;height:20px;background:#d4d0c8;border:1px solid;border-color:#fff #404040 #404040 #fff;box-shadow:inset -1px -1px 0 #808080"></div>
<div class="t" style="left:643.4px;top:535.90px;font-size:10.4px;line-height:10.4px;color:#000;transform:scaleX(0.9064);transform-origin:0 0;">Edit...</div>
<div class="r" style="left:521px;top:558px;width:86px;height:22px;background:#d4d0c8;border:1px solid;border-color:#fff #404040 #404040 #fff;box-shadow:inset -1px -1px 0 #808080"></div>
<div class="t" style="left:557.3px;top:564.70px;font-size:10.4px;line-height:10.4px;color:#000;transform:scaleX(0.8452);transform-origin:0 0;">OK</div>
<div class="r" style="left:612px;top:558px;width:86px;height:22px;background:#d4d0c8;border:1px solid;border-color:#fff #404040 #404040 #fff;box-shadow:inset -1px -1px 0 #808080"></div>
<div class="t" style="left:639.8px;top:564.70px;font-size:10.4px;line-height:10.4px;color:#000;transform:scaleX(0.9050);transform-origin:0 0;">Cancel</div>
<div class="r" style="left:714px;top:113px;width:462px;height:500px;background:#d4d0c8;border:1px solid;border-color:#d4d0c8 #404040 #404040 #d4d0c8;box-shadow:inset 1px 1px 0 #fff,inset -1px -1px 0 #808080"></div>
<div class="r" style="left:717px;top:115px;width:456px;height:17px;background:#808080"></div>
<svg class="r" style="left:719px;top:117px" width="13" height="13" viewBox="0 0 13 13"><rect x="0.5" y="0.5" width="12" height="12" fill="#fff" stroke="#8d8d8d" stroke-width="1"/><rect x="2" y="3" width="9" height="1.2" fill="#7a78b8"/><rect x="3" y="5.5" width="1" height="3.5" fill="#9a9ad0"/><rect x="5" y="5.5" width="5" height="3.5" fill="#b9b9d8"/><rect x="4" y="10" width="3" height="1.3" fill="#1fb8f5"/></svg>
<div class="t" style="left:734.1px;top:117.69px;font-size:11px;line-height:11px;color:#d4d0c8;transform:scaleX(0.9679);transform-origin:0 0;font-weight:bold;">Site System Status Summarizer Properties</div>
<div class="r" style="left:1157px;top:117px;width:14px;height:13px;background:#d4d0c8;border:1px solid;border-color:#fff #404040 #404040 #fff;box-shadow:inset -1px -1px 0 #808080"></div>
<svg class="r" style="left:1157px;top:117px" width="14" height="13" viewBox="0 0 14 13"><path d="M3.5 3 L10 9.5 M10 3 L3.5 9.5" stroke="#000" stroke-width="1.7"/></svg>
<div class="r" style="left:727px;top:162px;width:436px;height:405px;background:#d4d0c8;border:1px solid;border-color:#fff #404040 #404040 #fff;box-shadow:inset -1px -1px 0 #808080"></div>
<div class="r" style="left:730px;top:146px;width:43px;height:16px;background:#d4d0c8;border:1px solid;border-color:#fff transparent transparent #fff;border-bottom:0;border-right:0;border-top-left-radius:2px"></div>
<div class="r" style="left:772px;top:144px;width:60px;height:19px;background:#d4d0c8;border:1px solid;border-color:#fff #404040 transparent #fff;border-bottom:0;box-shadow:inset -1px 0 0 #808080;border-top-left-radius:2px"></div>
<div class="t" style="left:734.7px;top:149.80px;font-size:10.4px;line-height:10.4px;color:#000;transform:scaleX(0.8973);transform-origin:0 0;">General</div>
<div class="t" style="left:779.1px;top:148.60px;font-size:10.4px;line-height:10.4px;color:#000;transform:scaleX(0.8863);transform-origin:0 0;">Thresholds</div>
<div class="t" style="left:744.8px;top:171.70px;font-size:10.4px;line-height:10.4px;color:#000;transform:scaleX(0.9039);transform-origin:0 0;">Specify the free space thresholds for displaying Warning or Critical icons in the Site System</div>
<div class="t" style="left:744.8px;top:183.50px;font-size:10.4px;line-height:10.4px;color:#000;transform:scaleX(0.8928);transform-origin:0 0;">Status display.</div>
<div class="r" style="left:742px;top:225px;width:407px;height:1px;background:#808080"></div>
<div class="r" style="left:742px;top:226px;width:407px;height:1px;background:#fff"></div>
<div class="r" style="left:742px;top:236px;width:407px;height:56px;border:1px solid #808080;box-shadow:inset 1px 1px 0 #fff,1px 1px 0 #fff"></div>
<div class="r" style="left:748px;top:233px;width:84px;height:7px;background:#d4d0c8"></div>
<div class="t" style="left:751.6px;top:233.20px;font-size:10.4px;line-height:10.4px;color:#000;transform:scaleX(0.9031);transform-origin:0 0;">Default thresholds</div>
<svg class="r" style="left:756px;top:247.5px" width="15" height="14" viewBox="0 0 15 14"><path d="M7.5 0.8 L14.5 13.3 H0.5Z" fill="#f7e13a" stroke="#d0a400" stroke-width="1" stroke-linejoin="round"/><rect x="6.6" y="4.3" width="1.9" height="5.2" fill="#111"/><rect x="6.6" y="10.4" width="1.9" height="1.9" fill="#111"/></svg>
<svg class="r" style="left:756px;top:271px" width="15" height="15" viewBox="0 0 15 15"><circle cx="7.5" cy="7.5" r="7" fill="#a9adb6"/><circle cx="7.5" cy="7.5" r="6" fill="#e4e5e8"/><circle cx="7.5" cy="7.5" r="5.2" fill="#d01f26"/><path d="M5 5 L10 10 M10 5 L5 10" stroke="#fff" stroke-width="2.1"/></svg>
<div class="t" style="left:786.0px;top:252.30px;font-size:10.4px;line-height:10.4px;color:#000;transform:scaleX(0.8949);transform-origin:0 0;">Warning (KB):</div>
<div class="t" style="left:787.4px;top:275.50px;font-size:10.4px;line-height:10.4px;color:#000;transform:scaleX(0.8550);transform-origin:0 0;">Critical (KB):</div>
<div class="r" style="left:893px;top:246px;width:172px;height:17px;background:#fff;border:1px solid;border-color:#808080 #fff #fff #808080;box-shadow:inset 1px 1px 0 #404040,inset -1px -1px 0 #d4d0c8"></div>
<div class="r" style="left:893px;top:270px;width:172px;height:17px;background:#fff;border:1px solid;border-color:#808080 #fff #fff #808080;box-shadow:inset 1px 1px 0 #404040,inset -1px -1px 0 #d4d0c8"></div>
<div class="t" style="left:897.0px;top:250.90px;font-size:10.4px;line-height:10.4px;color:#000;transform:scaleX(0.9271);transform-origin:0 0;">10485760</div>
<div class="t" style="left:897.0px;top:275.20px;font-size:10.4px;line-height:10.4px;color:#000;transform:scaleX(0.9262);transform-origin:0 0;">5242880</div>
<div class="r" style="left:742px;top:299px;width:407px;height:1px;background:#808080"></div>
<div class="r" style="left:742px;top:300px;width:407px;height:1px;background:#fff"></div>
<div class="t" style="left:744.4px;top:313.20px;font-size:10.4px;line-height:10.4px;color:#000;transform:scaleX(0.9071);transform-origin:0 0;">Specific thresholds:</div>
<div class="r" style="left:1084px;top:306px;width:22px;height:22px;background:#000"></div>
<div class="r" style="left:1085px;top:307px;width:20px;height:20px;background:#d4d0c8;border:1px solid;border-color:#fff #404040 #404040 #fff;box-shadow:inset -1px -1px 0 #808080"></div>
<svg class="r" style="left:1086px;top:308px" width="19" height="19" viewBox="1086 308 19 19"><polygon points="1096.00,310.90 1097.21,314.29 1100.45,312.75 1098.91,315.99 1102.30,317.20 1098.91,318.41 1100.45,321.65 1097.21,320.11 1096.00,323.50 1094.79,320.11 1091.55,321.65 1093.09,318.41 1089.70,317.20 1093.09,315.99 1091.55,312.75 1094.79,314.29" fill="#f39a00"/><circle cx="1096" cy="317.2" r="3.28" fill="url(#gStar)"/></svg>
<div class="r" style="left:1106px;top:306px;width:21px;height:22px;background:#d4d0c8;border:1px solid;border-color:#fff #404040 #404040 #fff;box-shadow:inset -1px -1px 0 #808080"></div>
<svg class="r" style="left:1109px;top:309px" width="16" height="17" viewBox="1109 309 16 17"><rect x="1110.8" y="310.6" width="12.5" height="13.6" rx="1" fill="#f4f5fa" stroke="#8a8d96" stroke-width="1"/><rect x="1112.5" y="313" width="9" height="8.5" fill="none" stroke="#b4b8c8" stroke-width=".8"/><path d="M1113.5 315.5 h7 M1113.5 318 h7" stroke="#aab" stroke-width=".8"/><rect x="1115" y="322.6" width="3" height="1.3" fill="#20b8f0"/></svg>
<div class="r" style="left:1127px;top:306px;width:22px;height:22px;background:#d4d0c8;border:1px solid;border-color:#fff #404040 #404040 #fff;box-shadow:inset -1px -1px 0 #808080"></div>
<svg class="r" style="left:1130px;top:309px" width="17" height="17" viewBox="1130 309 17 17"><path d="M1145 311.5 Q1137 316 1133 324 M1132.8 312.5 Q1138 315.5 1143.5 323" fill="none" stroke="#e3261e" stroke-width="1.9" stroke-linecap="round"/></svg>
<div class="r" style="left:742px;top:330px;width:407px;height:221px;background:#fff;border:1px solid;border-color:#808080 #fff #fff #808080;box-shadow:inset 1px 1px 0 #404040,inset -1px -1px 0 #d4d0c8"></div>
<div class="r" style="left:744px;top:331px;width:135px;height:16px;background:#d4d0c8;border:1px solid;border-color:#fff #404040 #404040 #fff;box-shadow:inset -1px -1px 0 #808080"></div>
<div class="r" style="left:879px;top:331px;width:88px;height:16px;background:#d4d0c8;border:1px solid;border-color:#fff #404040 #404040 #fff;box-shadow:inset -1px -1px 0 #808080"></div>
<div class="r" style="left:967px;top:331px;width:83px;height:16px;background:#d4d0c8;border:1px solid;border-color:#fff #404040 #404040 #fff;box-shadow:inset -1px -1px 0 #808080"></div>
<div class="r" style="left:1050px;top:331px;width:97px;height:16px;background:#d4d0c8;border:1px solid;border-color:#fff #404040 #404040 #fff;box-shadow:inset -1px -1px 0 #808080"></div>
<div class="t" style="left:748.7px;top:335.00px;font-size:10.4px;line-height:10.4px;color:#000;transform:scaleX(0.9185);transform-origin:0 0;">Storage object</div>
<div class="t" style="left:884.8px;top:335.00px;font-size:10.4px;line-height:10.4px;color:#000;transform:scaleX(0.9201);transform-origin:0 0;">Warning threshold</div>
<div class="t" style="left:975.3px;top:335.00px;font-size:10.4px;line-height:10.4px;color:#000;transform:scaleX(0.8960);transform-origin:0 0;">Critical threshold</div>
<div class="r" style="left:744px;top:347px;width:306px;height:16px;background:#d4d0c8"></div>
<div class="r" style="left:747px;top:348px;width:23px;height:15px;background:radial-gradient(ellipse at center,rgba(140,140,140,.6),rgba(170,170,170,.3) 60%,rgba(200,200,200,0) 100%)"></div>
<div class="r" style="left:766px;top:348px;width:24px;height:15px;background:radial-gradient(ellipse at center,rgba(140,140,140,.6),rgba(170,170,170,.3) 60%,rgba(200,200,200,0) 100%)"></div>
<div class="r" style="left:747px;top:364px;width:23px;height:16px;background:radial-gradient(ellipse at center,rgba(140,140,140,.55),rgba(170,170,170,.25) 60%,rgba(220,220,220,0) 100%)"></div>
<div class="r" style="left:766px;top:364px;width:24px;height:16px;background:radial-gradient(ellipse at center,rgba(140,140,140,.55),rgba(170,170,170,.25) 60%,rgba(220,220,220,0) 100%)"></div>
<div class="t" style="left:789.7px;top:350.90px;font-size:10.4px;line-height:10.4px;color:#000;transform:scaleX(0.9052);transform-origin:0 0;">Database</div>
<div class="t" style="left:919.4px;top:350.90px;font-size:10.4px;line-height:10.4px;color:#000;transform:scaleX(0.9293);transform-origin:0 0;">10485760</div>
<div class="t" style="left:1006.5px;top:350.90px;font-size:10.4px;line-height:10.4px;color:#000;transform:scaleX(0.9435);transform-origin:0 0;">5242880</div>
<div class="t" style="left:790.0px;top:366.50px;font-size:10.4px;line-height:10.4px;color:#000;transform:scaleX(0.9165);transform-origin:0 0;">Transaction Log</div>
<div class="t" style="left:919.4px;top:366.50px;font-size:10.4px;line-height:10.4px;color:#000;transform:scaleX(0.9293);transform-origin:0 0;">10485760</div>
<div class="t" style="left:1006.5px;top:366.50px;font-size:10.4px;line-height:10.4px;color:#000;transform:scaleX(0.9435);transform-origin:0 0;">5242880</div>
<div class="r" style="left:951px;top:572px;width:67px;height:22px;background:#d4d0c8;border:1px solid;border-color:#fff #404040 #404040 #fff;box-shadow:inset -1px -1px 0 #808080"></div>
<div class="t" style="left:977.4px;top:578.90px;font-size:10.4px;line-height:10.4px;color:#000;transform:scaleX(0.8785);transform-origin:0 0;">OK</div>
<div class="r" style="left:1023px;top:572px;width:68px;height:22px;background:#d4d0c8;border:1px solid;border-color:#fff #404040 #404040 #fff;box-shadow:inset -1px -1px 0 #808080"></div>
<div class="t" style="left:1041.6px;top:578.90px;font-size:10.4px;line-height:10.4px;color:#000;transform:scaleX(0.9267);transform-origin:0 0;">Cancel</div>
<div class="r" style="left:1096px;top:572px;width:67px;height:22px;background:#d4d0c8;border:1px solid;border-color:#fff #404040 #404040 #fff;box-shadow:inset -1px -1px 0 #808080"></div>
<div class="t" style="left:1118.1px;top:579.90px;font-size:10.4px;line-height:10.4px;color:#fff;transform:scaleX(0.9148);transform-origin:0 0;">Apply</div>
<div class="t" style="left:1117.1px;top:578.90px;font-size:10.4px;line-height:10.4px;color:#808080;transform:scaleX(0.9148);transform-origin:0 0;">Apply</div>
<div class="r" style="left:1176px;top:113px;width:362px;height:409px;background:#d4d0c8;border:1px solid;border-color:#d4d0c8 #404040 #404040 #d4d0c8;box-shadow:inset 1px 1px 0 #fff,inset -1px -1px 0 #808080"></div>
<div class="r" style="left:1179px;top:115px;width:357px;height:17px;background:#0a246a"></div>
<div class="t" style="left:1180.4px;top:117.79px;font-size:11px;line-height:11px;color:#fff;transform:scaleX(0.9386);transform-origin:0 0;font-weight:bold;">New Free Space Threshold Properties</div>
<div class="r" style="left:1520px;top:117px;width:14px;height:13px;background:#d4d0c8;border:1px solid;border-color:#fff #404040 #404040 #fff;box-shadow:inset -1px -1px 0 #808080"></div>
<svg class="r" style="left:1520px;top:117px" width="14" height="13" viewBox="0 0 14 13"><path d="M3.5 3 L10 9.5 M10 3 L3.5 9.5" stroke="#000" stroke-width="1.7"/></svg>
<div class="r" style="left:1188px;top:162px;width:345px;height:331px;background:#d4d0c8;border:1px solid;border-color:#fff #404040 #404040 #fff;box-shadow:inset -1px -1px 0 #808080"></div>
<div class="r" style="left:1188px;top:144px;width:47px;height:19px;background:#d4d0c8;border:1px solid;border-color:#fff #404040 transparent #fff;border-bottom:0;box-shadow:inset -1px 0 0 #808080;border-top-left-radius:2px"></div>
<div class="t" style="left:1195.8px;top:149.00px;font-size:10.4px;line-height:10.4px;color:#000;transform:scaleX(0.8784);transform-origin:0 0;">General</div>
<svg class="r" style="left:1203px;top:175px" width="29" height="30" viewBox="0 0 29 30"><rect x="3.5" y="1" width="19" height="26" fill="#f5f7ff" stroke="#7f90c8" stroke-width="1"/><path d="M1 5h4M1 9h4M1 13h4M1 17h4M1 21h4" stroke="#e5a50a" stroke-width="1.6"/><circle cx="13.5" cy="7" r="2" fill="#2240c0"/><rect x="11.5" y="11" width="4" height="10" fill="#2240c0"/><rect x="13.5" y="17" width="13" height="12" rx="1" fill="#dfe6f5" stroke="#7f90c8" stroke-width="1"/><circle cx="9" cy="23" r="2" fill="none" stroke="#7f90c8" stroke-width=".8"/></svg>
<div class="t" style="left:1237.7px;top:181.50px;font-size:10.4px;line-height:10.4px;color:#000;transform:scaleX(0.9083);transform-origin:0 0;">Free Space Threshold</div>
<div class="r" style="left:1202px;top:215px;width:316px;height:1px;background:#808080"></div>
<div class="r" style="left:1202px;top:216px;width:316px;height:1px;background:#fff"></div>
<div class="t" style="left:1205.1px;top:230.90px;font-size:10.4px;line-height:10.4px;color:#000;transform:scaleX(0.9091);transform-origin:0 0;">Storage object:</div>
<div class="r" style="left:1332px;top:226px;width:186px;height:19px;background:#fff;border:1px solid;border-color:#808080 #fff #fff #808080;box-shadow:inset 1px 1px 0 #404040,inset -1px -1px 0 #d4d0c8"></div>
<div class="r" style="left:1334px;top:228px;width:168px;height:15px;background:linear-gradient(90deg,#ececec,#d4d4d4 12%,#d8d8d8 45%,#d0d0d0 70%,#f2f2f2 88%,#fff)"></div>
<div class="r" style="left:1334px;top:228px;width:168px;height:15px;background:linear-gradient(#f2f2f2,rgba(255,255,255,0) 35%,rgba(255,255,255,0) 70%,#eeeeee)"></div>
<div class="r" style="left:1502px;top:228px;width:14px;height:15px;background:#d4d0c8;border:1px solid;border-color:#fff #404040 #404040 #fff;box-shadow:inset -1px -1px 0 #808080"></div>
<svg class="r" style="left:1505px;top:233px" width="8" height="5" viewBox="0 0 8 5"><path d="M0 0H7L3.5 4Z" fill="#000"/></svg>
<div class="r" style="left:1202px;top:258px;width:315px;height:64px;border:1px solid #808080;box-shadow:inset 1px 1px 0 #fff,1px 1px 0 #fff"></div>
<div class="r" style="left:1209px;top:254px;width:100px;height:8px;background:#d4d0c8"></div>
<div class="t" style="left:1212.5px;top:254.60px;font-size:10.4px;line-height:10.4px;color:#000;transform:scaleX(0.8989);transform-origin:0 0;">Free space thresholds</div>
<svg class="r" style="left:1218px;top:270.5px" width="15" height="14" viewBox="0 0 15 14"><path d="M7.5 0.8 L14.5 13.3 H0.5Z" fill="#f7e13a" stroke="#d0a400" stroke-width="1" stroke-linejoin="round"/><rect x="6.6" y="4.3" width="1.9" height="5.2" fill="#111"/><rect x="6.6" y="10.4" width="1.9" height="1.9" fill="#111"/></svg>
<svg class="r" style="left:1218px;top:296px" width="15" height="15" viewBox="0 0 15 15"><circle cx="7.5" cy="7.5" r="7" fill="#a9adb6"/><circle cx="7.5" cy="7.5" r="6" fill="#e4e5e8"/><circle cx="7.5" cy="7.5" r="5.2" fill="#d01f26"/><path d="M5 5 L10 10 M10 5 L5 10" stroke="#fff" stroke-width="2.1"/></svg>
<div class="t" style="left:1245.0px;top:276.00px;font-size:10.4px;line-height:10.4px;color:#000;transform:scaleX(0.8949);transform-origin:0 0;">Warning (KB):</div>
<div class="t" style="left:1245.0px;top:300.10px;font-size:10.4px;line-height:10.4px;color:#000;transform:scaleX(0.8567);transform-origin:0 0;">Critical (KB):</div>
<div class="r" style="left:1407px;top:271px;width:93px;height:18px;background:#fff;border:1px solid;border-color:#808080 #fff #fff #808080;box-shadow:inset 1px 1px 0 #404040,inset -1px -1px 0 #d4d0c8"></div>
<div class="r" style="left:1407px;top:295px;width:93px;height:18px;background:#fff;border:1px solid;border-color:#808080 #fff #fff #808080;box-shadow:inset 1px 1px 0 #404040,inset -1px -1px 0 #d4d0c8"></div>
<div class="t" style="left:1411.0px;top:276.00px;font-size:10.4px;line-height:10.4px;color:#000;transform:scaleX(0.9271);transform-origin:0 0;">10485760</div>
<div class="t" style="left:1411.0px;top:299.70px;font-size:10.4px;line-height:10.4px;color:#000;transform:scaleX(0.9262);transform-origin:0 0;">5242880</div>
<div class="r" style="left:1386px;top:497px;width:68px;height:22px;background:#000"></div>
<div class="r" style="left:1387px;top:498px;width:66px;height:20px;background:#d4d0c8;border:1px solid;border-color:#fff #404040 #404040 #fff;box-shadow:inset -1px -1px 0 #808080"></div>
<div class="t" style="left:1413.5px;top:503.70px;font-size:10.4px;line-height:10.4px;color:#000;transform:scaleX(0.8785);transform-origin:0 0;">OK</div>
<div class="r" style="left:1458px;top:497px;width:69px;height:22px;background:#d4d0c8;border:1px solid;border-color:#fff #404040 #404040 #fff;box-shadow:inset -1px -1px 0 #808080"></div>
<div class="t" style="left:1476.7px;top:503.70px;font-size:10.4px;line-height:10.4px;color:#000;transform:scaleX(0.9267);transform-origin:0 0;">Cancel</div>
</body></html>
